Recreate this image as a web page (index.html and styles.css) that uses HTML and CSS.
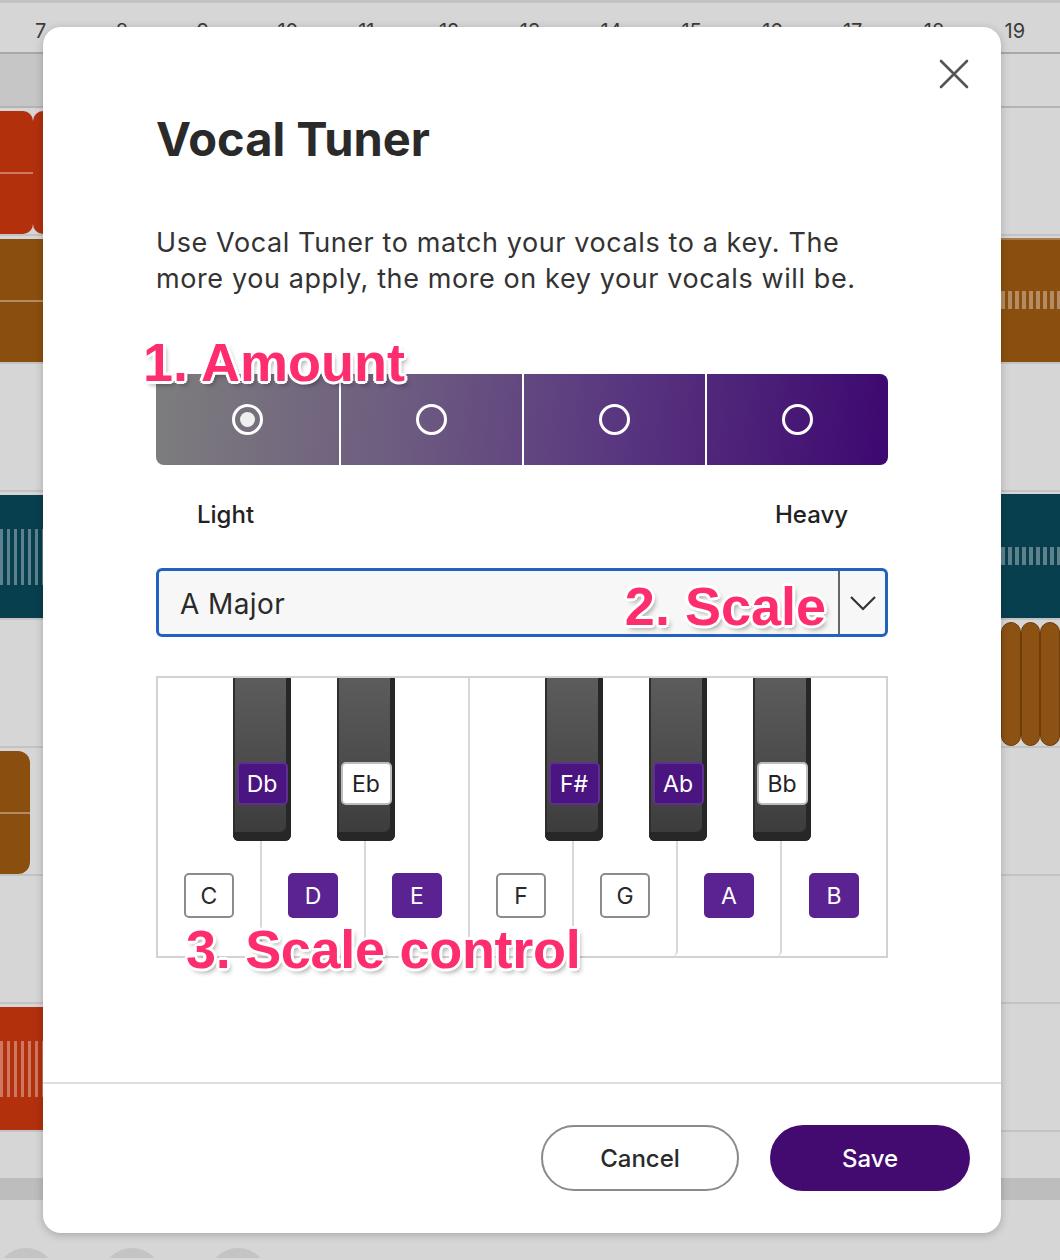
FILE: index.html
```html
<!DOCTYPE html>
<html lang="en">
<head>
  <meta charset="UTF-8" />
  <meta name="viewport" content="width=device-width, initial-scale=1.0" />
  <title>Vocal Tuner</title>
  <link rel="stylesheet" href="styles.css">
</head>
<body>
  <div class="daw">
    <div class="ruler">
      <span>7</span><span>8</span><span>9</span><span>10</span><span>11</span><span>12</span><span>13</span>
      <span>14</span><span>15</span><span>16</span><span>17</span><span>18</span><span>19</span>
    </div>
    <div class="lane-top"><div class="lane-top-left"></div></div>

    <div class="track">
      <div class="cell-left"><div class="clip red cut-a wave-dots"></div><div class="clip red cut-b"></div></div>
      <div class="cell-right"></div>
    </div>
    <div class="track">
      <div class="cell-left"><div class="clip brown wave-dots"></div></div>
      <div class="cell-right"><div class="clip brown wave-small head"></div></div>
    </div>
    <div class="track">
      <div class="cell-left"></div>
      <div class="cell-right"></div>
    </div>
    <div class="track">
      <div class="cell-left"><div class="clip teal wave"></div></div>
      <div class="cell-right"><div class="clip teal wave-small"></div></div>
    </div>
    <div class="track">
      <div class="cell-left"></div>
      <div class="cell-right pills">
        <div class="pill"></div><div class="pill"></div><div class="pill"></div>
      </div>
    </div>
    <div class="track">
      <div class="cell-left"><div class="clip brown wave-dots short"></div></div>
      <div class="cell-right"></div>
    </div>
    <div class="track">
      <div class="cell-left"></div>
      <div class="cell-right"></div>
    </div>
    <div class="track">
      <div class="cell-left"><div class="clip red wave"></div></div>
      <div class="cell-right"></div>
    </div>
    <div class="track last"></div>
    <div class="daw-foot"></div>
    <div class="transport">
      <span class="knob"></span><span class="knob"></span><span class="knob"></span>
    </div>
  </div>

  <div class="modal">
    <div class="modal-head">
      <button class="close" aria-label="Close">
        <svg width="30" height="30" viewBox="0 0 30 30">
          <path d="M2 2 L28 28 M28 2 L2 28" stroke="#555" stroke-width="2.6" stroke-linecap="round" fill="none"/>
        </svg>
      </button>
    </div>

    <div class="modal-main">
      <h1 class="title">Vocal Tuner</h1>
      <p class="desc">Use Vocal Tuner to match your vocals to a key. The more you apply, the more on key your vocals will be.</p>

      <div class="amount">
        <div class="seg"><span class="radio selected"></span></div>
        <div class="seg"><span class="radio"></span></div>
        <div class="seg"><span class="radio"></span></div>
        <div class="seg"><span class="radio"></span></div>
        <div class="callout callout-amount">1. Amount</div>
      </div>
      <div class="amount-labels">
        <span>Light</span>
        <span>Heavy</span>
      </div>

      <div class="scale-select">
        <div class="scale-value">A Major</div>
        <div class="scale-arrow">
          <svg width="28" height="16" viewBox="0 0 28 16">
            <path d="M2 2 L14 14 L26 2" stroke="#333" stroke-width="2.2" fill="none"/>
          </svg>
        </div>
        <div class="callout callout-scale">2. Scale</div>
      </div>

      <div class="piano">
        <div class="white-keys">
          <div class="wkey"><span class="note">C</span></div>
          <div class="wkey"><span class="note on">D</span></div>
          <div class="wkey"><span class="note on">E</span></div>
          <div class="wkey"><span class="note">F</span></div>
          <div class="wkey"><span class="note">G</span></div>
          <div class="wkey"><span class="note on">A</span></div>
          <div class="wkey"><span class="note on">B</span></div>
        </div>
        <div class="black-keys">
          <div class="bkey"><span class="bnote on">Db</span></div>
          <div class="bkey"><span class="bnote">Eb</span></div>
          <div class="bkey-gap"></div>
          <div class="bkey"><span class="bnote on">F#</span></div>
          <div class="bkey"><span class="bnote on">Ab</span></div>
          <div class="bkey"><span class="bnote">Bb</span></div>
        </div>
        <div class="callout callout-control">3. Scale control</div>
      </div>
    </div>

    <div class="modal-foot">
      <button class="btn btn-cancel">Cancel</button>
      <button class="btn btn-save">Save</button>
    </div>
  </div>
</body>
</html>
```

FILE: styles.css
```css
* {
  margin: 0;
  padding: 0;
  box-sizing: border-box;
}
body {
  font-family: "Inter", "Noto Sans", sans-serif;
  background: #d5d5d5;
  width: 1060px;
  height: 1260px;
  overflow: hidden;
  position: relative;
}

/* background editor */
.daw {
  width: 1060px;
  height: 1260px;
  display: flex;
  flex-direction: column;
  background: #d6d6d6;
  overflow: hidden;
}
.daw > * {
  flex: none;
}
.ruler {
  height: 54px;
  border-top: 3px solid #c2c2c2;
  border-bottom: 2px solid #a8a8a8;
  padding: 16px 0 0 35px;
  display: flex;
  color: #3c3c3c;
  font-size: 20px;
}
.ruler span {
  width: 80.8px;
  flex: none;
}
.lane-top {
  height: 54px;
  border-bottom: 2px solid #b4b4b4;
  display: flex;
}
.lane-top-left {
  width: 43px;
  background: #c6c6c6;
}
.track {
  height: 128px;
  border-bottom: 2px solid #c3c3c3;
  display: flex;
  justify-content: space-between;
}
.track.last {
  height: 46px;
  border-bottom: none;
}
.cell-left {
  width: 43px;
  display: flex;
  padding: 3px 0 0;
}
.cell-right {
  width: 59px;
  display: flex;
  padding: 2px 0 0;
}
.clip {
  flex: 1;
  height: 100%;
}
.red { background: #b3300d; }
.brown { background: #8a4f0f; }
.teal { background: #083f4e; }
.cut-a {
  flex: none;
  width: 33px;
  border-radius: 0 10px 10px 0;
}
.cut-b {
  border-radius: 10px 0 0 10px;
}
.short {
  flex: none;
  width: 30px;
  border-radius: 0 12px 12px 0;
}
.wave {
  background-image: repeating-linear-gradient(90deg, rgba(255,255,255,0.35) 0 3px, transparent 3px 7px);
  background-size: 100% 56px;
  background-position: center;
  background-repeat: no-repeat;
}
.wave-small {
  background-image: repeating-linear-gradient(90deg, rgba(255,255,255,0.35) 0 4px, transparent 4px 7px);
  background-size: 100% 18px;
  background-position: center;
  background-repeat: no-repeat;
}
.wave-dots {
  background-image: linear-gradient(rgba(255,255,255,0.35), rgba(255,255,255,0.35));
  background-size: 100% 2px;
  background-position: center;
  background-repeat: no-repeat;
}
.head {
  box-shadow: inset 0 30px 0 -28px rgba(255,255,255,0.25);
}
.pill {
  flex: 1;
  background: #8c5214;
  border: 1px solid #6e3d07;
  border-radius: 12px;
}
.daw-foot {
  height: 22px;
  background: #bdbdbd;
}
.transport {
  height: 58px;
  display: flex;
  gap: 46px;
  padding-top: 48px;
  overflow: hidden;
}
.knob {
  width: 60px;
  height: 60px;
  border-radius: 50%;
  background: #c4c4c4;
  flex: none;
}
.knob:first-child {
  margin-left: -4px;
}

/* modal */
.modal {
  position: absolute;
  left: 43px;
  top: 27px;
  width: 958px;
  height: 1206px;
  background: #fff;
  border-radius: 18px;
  box-shadow: 0 2px 8px rgba(0, 0, 0, 0.22);
  display: flex;
  flex-direction: column;
}
.modal-head {
  display: flex;
  justify-content: flex-end;
  padding: 32px 32px 0;
}
.close {
  width: 30px;
  height: 30px;
  border: none;
  background: none;
  display: flex;
}
.modal-main {
  flex: 1;
  padding: 0 113px;
}
.title {
  margin-top: 22px;
  font-size: 47px;
  line-height: 56px;
  font-weight: 700;
  color: #2a2a2a;
}
.desc {
  margin-top: 58px;
  font-size: 27px;
  line-height: 36px;
  letter-spacing: 0.6px;
  color: #333;
}
.amount {
  margin-top: 77px;
  height: 91px;
  border-radius: 8px;
  background: linear-gradient(95deg, #7d7d7d 0%, #6c5a80 35%, #5a3880 62%, #3d0870 100%);
  display: grid;
  grid-template-columns: repeat(4, 1fr);
  position: relative;
}
.seg {
  display: flex;
  align-items: center;
  justify-content: center;
}
.seg + .seg {
  border-left: 2px solid #fff;
}
.radio {
  width: 31px;
  height: 31px;
  border-radius: 50%;
  border: 3px solid #fff;
  display: flex;
  align-items: center;
  justify-content: center;
}
.radio.selected::after {
  content: "";
  width: 15px;
  height: 15px;
  border-radius: 50%;
  background: #efefef;
}
.amount-labels {
  margin-top: 35px;
  padding: 0 40px 0 41px;
  display: flex;
  justify-content: space-between;
  font-size: 24px;
  line-height: 30px;
  font-weight: 500;
  color: #222;
}
.scale-select {
  margin-top: 38px;
  height: 69px;
  border: 3px solid #2361bf;
  border-radius: 6px;
  background: #f7f7f7;
  display: flex;
  align-items: stretch;
  position: relative;
}
.scale-value {
  flex: 1;
  display: flex;
  align-items: center;
  padding: 2px 0 0 21px;
  font-size: 28px;
  letter-spacing: 0.4px;
  color: #2a2a2a;
}
.scale-arrow {
  width: 47px;
  border-left: 2px solid #666;
  display: flex;
  align-items: center;
  justify-content: center;
}

/* piano */
.piano {
  margin-top: 39px;
  height: 282px;
  border: 2px solid #d2d2d2;
  display: grid;
  position: relative;
}
.white-keys,
.black-keys {
  grid-area: 1 / 1;
}
.white-keys {
  display: grid;
  grid-template-columns: repeat(7, 1fr);
}
.wkey {
  border-right: 2px solid #d8d8d8;
  border-radius: 0 0 5px 5px;
  display: flex;
  align-items: flex-end;
  justify-content: center;
  padding-bottom: 38px;
}
.wkey:last-child {
  border-right: none;
}
.note {
  width: 50px;
  height: 45px;
  border-radius: 5px;
  border: 2px solid #8c8c8c;
  background: #fff;
  color: #2a2a2a;
  font-size: 23px;
  display: flex;
  align-items: center;
  justify-content: center;
}
.note.on {
  background: #5a2391;
  border-color: #5a2391;
  color: #fff;
}
.black-keys {
  display: grid;
  grid-template-columns: repeat(6, 1fr);
  padding: 0 52px;
  height: 163px;
}
.bkey {
  justify-self: center;
  width: 58px;
  height: 163px;
  border-radius: 0 0 6px 6px;
  background: linear-gradient(180deg, #5c5c5c 0%, #464646 70%, #3a3a3a 100%);
  box-shadow: inset -5px -9px 0 #272727, inset 2px 0 0 #2e2e2e;
  display: flex;
  justify-content: center;
  padding-top: 84px;
}
.bnote {
  width: 51px;
  height: 43px;
  border-radius: 5px;
  border: 2px solid #bdbdbd;
  background: #fff;
  color: #222;
  font-size: 23px;
  display: flex;
  align-items: center;
  justify-content: center;
}
.bnote.on {
  background: #4a1580;
  border-color: #5d3090;
  color: #fff;
}

/* annotations over the screenshot */
.callout {
  position: absolute;
  font-family: "Liberation Sans", Arial, sans-serif;
  font-weight: 700;
  font-size: 54px;
  line-height: 54px;
  color: #fd2d6e;
  white-space: nowrap;
  text-shadow:
    2px 0 0 #fff, -2px 0 0 #fff, 0 2px 0 #fff, 0 -2px 0 #fff,
    2px 2px 0 #fff, -2px -2px 0 #fff, 2px -2px 0 #fff, -2px 2px 0 #fff,
    3px 0 0 #fff, -3px 0 0 #fff, 0 3px 0 #fff, 0 -3px 0 #fff,
    3px 4px 5px rgba(0, 0, 0, 0.35);
}
.callout-amount {
  left: -13px;
  top: -39px;
}
.callout-scale {
  right: 59px;
  top: 8px;
}
.callout-control {
  left: 28px;
  top: 244px;
  letter-spacing: -0.3px;
}

/* footer */
.modal-foot {
  border-top: 2px solid #dedede;
  padding: 41px 31px 42px;
  display: flex;
  justify-content: flex-end;
  gap: 31px;
}
.btn {
  height: 66px;
  border-radius: 33px;
  font-family: "Inter", "Noto Sans", sans-serif;
  font-size: 24px;
  font-weight: 500;
}
.btn-cancel {
  width: 198px;
  background: #fff;
  border: 2px solid #8a8a8a;
  color: #2a2a2a;
}
.btn-save {
  width: 200px;
  background: #430b6f;
  border: none;
  color: #fff;
}
```
